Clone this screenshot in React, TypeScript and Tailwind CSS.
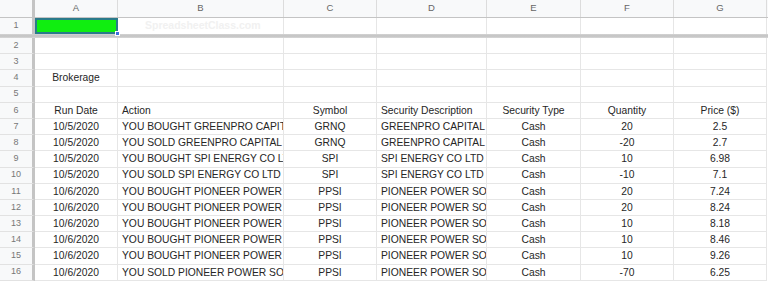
const cols = ['A', 'B', 'C', 'D', 'E', 'F', 'G']

type Row = string[]

const rows: Row[] = [
  ['', '', '', '', '', '', ''],
  ['', '', '', '', '', '', ''],
  ['Brokerage', '', '', '', '', '', ''],
  ['', '', '', '', '', '', ''],
  ['Run Date', 'Action', 'Symbol', 'Security Description', 'Security Type', 'Quantity', 'Price ($)'],
  ['10/5/2020', 'YOU BOUGHT GREENPRO CAPITAL CORP', 'GRNQ', 'GREENPRO CAPITAL CORP', 'Cash', '20', '2.5'],
  ['10/5/2020', 'YOU SOLD GREENPRO CAPITAL CORP', 'GRNQ', 'GREENPRO CAPITAL CORP', 'Cash', '-20', '2.7'],
  ['10/5/2020', 'YOU BOUGHT SPI ENERGY CO LTD', 'SPI', 'SPI ENERGY CO LTD ORD', 'Cash', '10', '6.98'],
  ['10/5/2020', 'YOU SOLD SPI ENERGY CO LTD ORD', 'SPI', 'SPI ENERGY CO LTD ORD', 'Cash', '-10', '7.1'],
  ['10/6/2020', 'YOU BOUGHT PIONEER POWER SOLUTIONS', 'PPSI', 'PIONEER POWER SOLUTIONS', 'Cash', '20', '7.24'],
  ['10/6/2020', 'YOU BOUGHT PIONEER POWER SOLUTIONS', 'PPSI', 'PIONEER POWER SOLUTIONS', 'Cash', '20', '8.24'],
  ['10/6/2020', 'YOU BOUGHT PIONEER POWER SOLUTIONS', 'PPSI', 'PIONEER POWER SOLUTIONS', 'Cash', '10', '8.18'],
  ['10/6/2020', 'YOU BOUGHT PIONEER POWER SOLUTIONS', 'PPSI', 'PIONEER POWER SOLUTIONS', 'Cash', '10', '8.46'],
  ['10/6/2020', 'YOU BOUGHT PIONEER POWER SOLUTIONS', 'PPSI', 'PIONEER POWER SOLUTIONS', 'Cash', '10', '9.26'],
  ['10/6/2020', 'YOU SOLD PIONEER POWER SOLUTIONS', 'PPSI', 'PIONEER POWER SOLUTIONS', 'Cash', '-70', '6.25'],
]

// columns B and D are left aligned, the rest centered
const align = ['justify-center', 'justify-start pl-[4px]', 'justify-center', 'justify-start pl-[4px]', 'justify-center', 'justify-center', 'justify-center']

const gridCols = 'grid grid-cols-[35px_83px_166px_93px_110px_94px_93px_93px]'

export default function App() {
  return (
    <div className="w-[768px] h-[281px] overflow-hidden bg-white font-['Liberation_Sans',Arial,sans-serif] text-[10.3px] text-[#262626]">
      {/* Column headers */}
      <div className={`${gridCols} h-[18px] bg-[#f8f9fa] border-b border-[#c4c4c4]`}>
        <div className="border-r-[3px] border-[#c4c4c4]" />
        {cols.map(c => (
          <div key={c} className="flex items-center justify-center border-r border-[#dcdcdc] text-[9.5px] text-[#666]">
            {c}
          </div>
        ))}
      </div>

      {/* Frozen row 1 */}
      <div className={`${gridCols} h-[16px]`}>
        <div className="flex items-center justify-center bg-[#f8f9fa] border-r-[3px] border-[#c4c4c4] text-[9px] text-[#777]">1</div>
        <div className="relative bg-[#10ee10] border-2 border-[#2a7a8a]">
          <div className="absolute -right-[4px] -bottom-[4px] w-[5px] h-[5px] bg-[#3b6fe0] border border-white" />
        </div>
        <div className="flex items-center pl-[27px] border-r border-[#e6e6e6] font-bold text-[10.5px] text-[#f1f1f1]">
          SpreadsheetClass.com
        </div>
        {[0, 1, 2, 3, 4].map(i => (
          <div key={i} className="border-r border-[#e6e6e6]" />
        ))}
      </div>

      {/* Freeze bar */}
      <div className="h-[4px] bg-gradient-to-b from-[#d4d4d4] via-[#c2c2c2] to-[#d8d8d8]" />

      {rows.map((row, r) => (
        <div key={r} className={`${gridCols} h-[16.2px]`}>
          <div className="flex items-center justify-center bg-[#f8f9fa] border-r-[3px] border-b border-r-[#c4c4c4] border-b-[#e2e2e2] text-[9px] text-[#777]">
            {r + 2}
          </div>
          {row.map((cell, c) => (
            <div
              key={c}
              className={`flex items-center overflow-hidden whitespace-nowrap border-r border-b border-[#e6e6e6] ${align[c]}`}
            >
              {cell}
            </div>
          ))}
        </div>
      ))}
    </div>
  )
}
